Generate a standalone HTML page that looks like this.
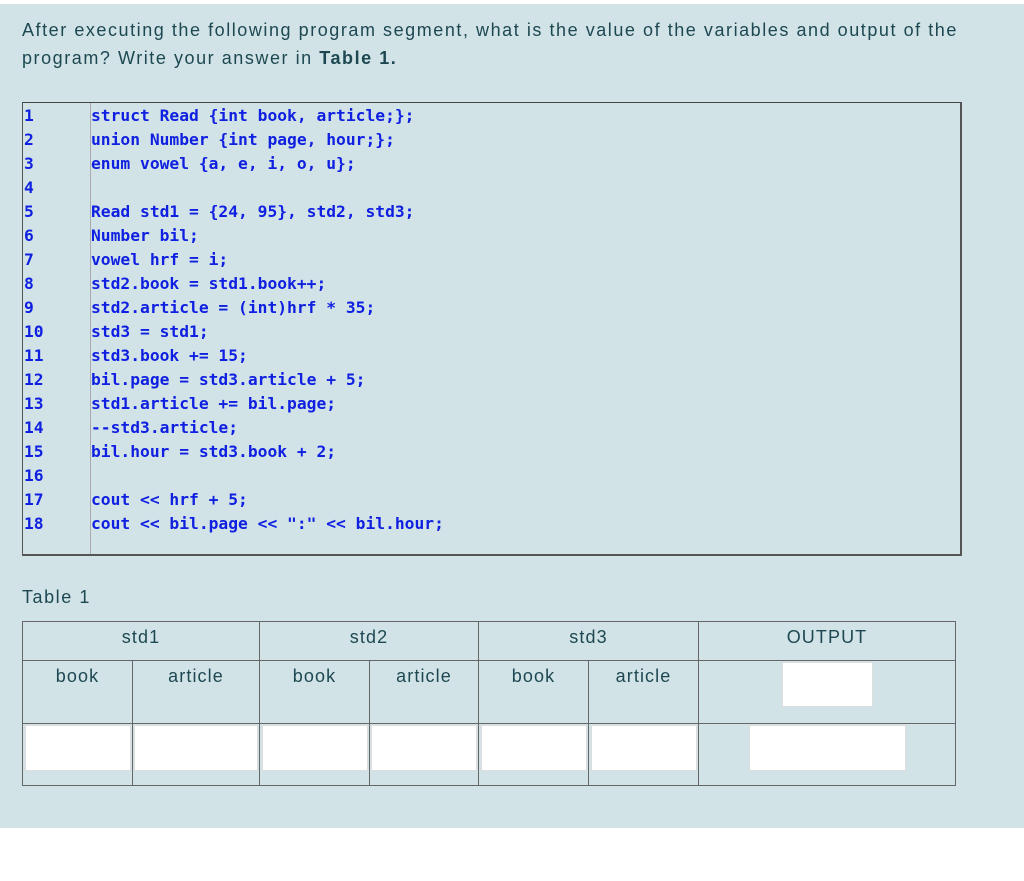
<!DOCTYPE html>
<html><head><meta charset="utf-8"><style>
body{margin:0;width:1024px;height:881px;background:#fff;position:relative;overflow:hidden;font-family:"Liberation Sans",sans-serif}
#bg{position:absolute;left:0;top:4px;width:1024px;height:824px;background:#d1e3e7}
.p{position:absolute;left:22px;color:#1d4852;font-size:18px;letter-spacing:1.55px;white-space:nowrap}
#code{position:absolute;left:22px;top:102px;width:937px;height:451px;border:1px solid #555;border-right:2px solid #555;border-bottom:2px solid #555;border-top:1px solid #444}
#gut{position:absolute;left:67px;top:0;width:1px;height:100%;background:#aaa}
.ln,.cl{position:absolute;font-family:"DejaVu Sans Mono",monospace;font-weight:bold;font-size:16.3px;color:#1020e0;white-space:pre;line-height:24px}
.ln{left:1px}.cl{left:68px}
table{position:absolute;left:22px;top:621px;border-collapse:collapse;color:#1d4852;font-size:18px;letter-spacing:1.1px}
td{border:1px solid #666;padding:0;text-align:center;vertical-align:top}
.w{background:#fff;border:1px solid #ddd;box-sizing:border-box;margin:0 auto}
</style></head><body>
<div id="bg"></div>
<div class="p" style="top:20px">After executing the following program segment, what is the value of the variables and output of the</div>
<div class="p" style="top:48px">program? Write your answer in <b>Table 1.</b></div>
<div id="code"><div id="gut"></div>
<div class="ln" style="top:1px">1
2
3
4
5
6
7
8
9
10
11
12
13
14
15
16
17
18</div>
<div class="cl" style="top:1px">struct Read {int book, article;};
union Number {int page, hour;};
enum vowel {a, e, i, o, u};

Read std1 = {24, 95}, std2, std3;
Number bil;
vowel hrf = i;
std2.book = std1.book++;
std2.article = (int)hrf * 35;
std3 = std1;
std3.book += 15;
bil.page = std3.article + 5;
std1.article += bil.page;
--std3.article;
bil.hour = std3.book + 2;

cout &lt;&lt; hrf + 5;
cout &lt;&lt; bil.page &lt;&lt; ":" &lt;&lt; bil.hour;</div>
</div>
<div class="p" style="top:587px">Table 1</div>
<table>
<tr style="height:39px"><td colspan="2" style="width:236px;padding-top:5px">std1</td><td colspan="2" style="padding-top:5px">std2</td><td colspan="2" style="padding-top:5px">std3</td><td style="width:256px;padding-top:5px">OUTPUT</td></tr>
<tr style="height:63px"><td style="width:109px;padding-top:5px">book</td><td style="width:126px;padding-top:5px">article</td><td style="width:109px;padding-top:5px">book</td><td style="width:108px;padding-top:5px">article</td><td style="width:109px;padding-top:5px">book</td><td style="width:109px;padding-top:5px">article</td><td><div class="w" style="width:91px;height:45px;margin-top:1px"></div></td></tr>
<tr style="height:62px"><td><div class="w" style="width:106px;height:46px;margin-top:1px"></div></td><td><div class="w" style="width:124px;height:46px;margin-top:1px"></div></td><td><div class="w" style="width:106px;height:46px;margin-top:1px"></div></td><td><div class="w" style="width:106px;height:46px;margin-top:1px"></div></td><td><div class="w" style="width:106px;height:46px;margin-top:1px"></div></td><td><div class="w" style="width:106px;height:46px;margin-top:1px"></div></td><td><div class="w" style="width:157px;height:46px;margin-top:1px"></div></td></tr>
</table>
</body></html>
